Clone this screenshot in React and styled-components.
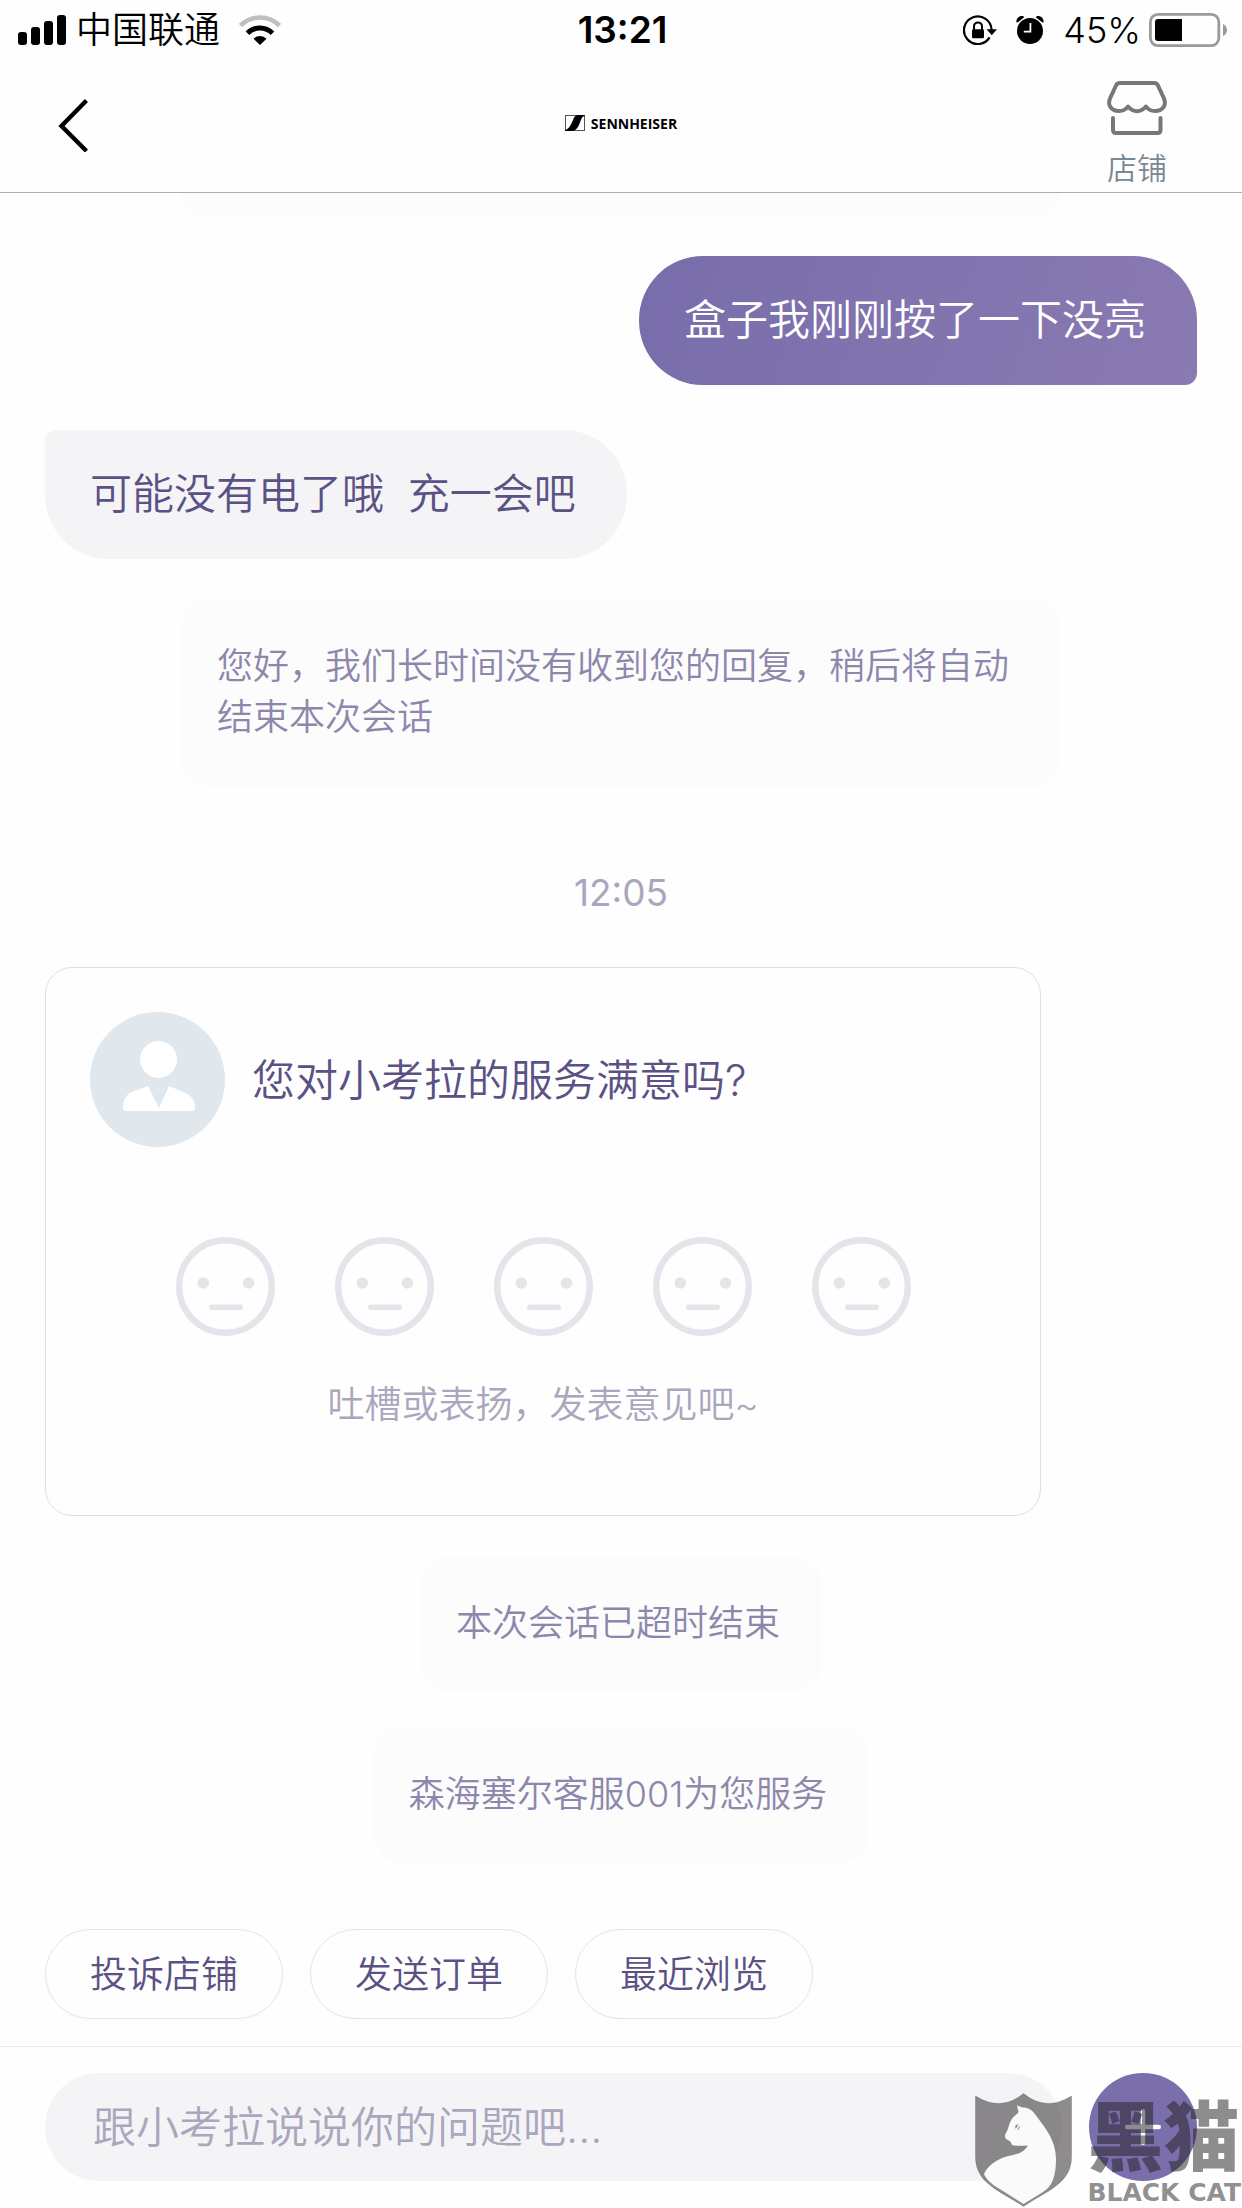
import React from 'react';
import styled, { createGlobalStyle } from 'styled-components';

const quickActions = ['投诉店铺', '发送订单', '最近浏览'];
const scores = [1, 2, 3, 4, 5];

const SignalIcon = () => (
  <svg width="48" height="30" viewBox="0 0 48 30" aria-hidden="true">
    <rect x="0" y="17" width="9" height="13" rx="3" />
    <rect x="13" y="12" width="9" height="18" rx="3" />
    <rect x="26" y="6" width="9" height="24" rx="3" />
    <rect x="39" y="0" width="9" height="30" rx="3" />
  </svg>
);

const WifiIcon = () => (
  <svg width="42" height="30" viewBox="0 0 42 30" aria-hidden="true">
    <path d="M1.5 10.5A27.7 27.7 0 0 1 40.5 10.5" fill="none" stroke="#bfbfbf" strokeWidth="4.6" />
    <path d="M8.5 18.2A17.5 17.5 0 0 1 33.5 18.2" fill="none" stroke="#000" strokeWidth="5" />
    <path d="M21 30L14.5 23.7A9.2 9.2 0 0 1 27.5 23.7Z" />
  </svg>
);

const RotationLockIcon = () => (
  <svg width="34" height="30" viewBox="0 0 34 30" aria-hidden="true">
    <path d="M26.6 22.4A13.8 13.8 0 1 1 28.6 15" fill="none" stroke="#000" strokeWidth="2.2" />
    <path d="M23.5 14.3H34L28.8 20.3Z" />
    <rect x="9" y="14.3" width="12" height="9" rx="1.4" />
    <path d="M11 15V11.4A4 4 0 0 1 19 11.4V15" fill="none" stroke="#000" strokeWidth="2" />
  </svg>
);

const AlarmIcon = () => (
  <svg width="28" height="30" viewBox="0 0 28 30" aria-hidden="true">
    <circle cx="14" cy="16" r="13" />
    <path d="M0.4 7.2C0 3.2 3.4 0.4 7 1L8.2 2.2L1.6 7.6Z" />
    <path d="M27.6 7.2C28 3.2 24.6 0.4 21 1L19.8 2.2L26.4 7.6Z" />
    <path d="M14.4 8V16.6H7.8" fill="none" stroke="#fff" strokeWidth="1.8" />
  </svg>
);

const BatteryIcon = () => (
  <svg width="78" height="34" viewBox="0 0 78 34" aria-hidden="true">
    <rect x="1.4" y="1.4" width="68.4" height="31.2" rx="7.5" fill="none" stroke="#9a9a9a" strokeWidth="2.8" />
    <path d="M9 6H33V28H9Q6 28 6 25V9Q6 6 9 6Z" />
    <path d="M74 11Q78 13 78 17T74 23Z" fill="#9a9a9a" />
  </svg>
);

const BackIcon = () => (
  <svg width="30" height="58" viewBox="0 0 30 58" fill="none" stroke="#000" strokeWidth="4.4" aria-hidden="true">
    <path d="M28.5 6.5L3.5 32L28.5 57" />
  </svg>
);

const BrandMark = () => (
  <svg width="20" height="16" viewBox="0 0 20 16" aria-hidden="true">
    <rect x="0.5" y="0.5" width="19" height="15" fill="none" stroke="#555" />
    <path d="M0 15C4 14 6 10 8 5C9 2 10 1 12 0H19.5V1C16 2 16 6 14 10C12 14 10.5 15.5 7 16H0Z" />
  </svg>
);

const StoreIcon = () => (
  <svg width="60" height="54" viewBox="0 0 60 54" fill="none" stroke="#777" strokeWidth="4" strokeLinecap="round" strokeLinejoin="round" aria-hidden="true">
    <path d="M13 2H47Q50 2 51 4.5L57 17.5C60 25 55 30 48 30C44 30 41 28.5 39 25.5C36 29 33 30.2 30 30.2C27 30.2 24 29 21 25.5C19 28.5 16 30 12 30C5 30 0 25 3 17.5L9 4.5Q10 2 13 2Z" />
    <path d="M6 37V49Q6 52 9 52H50.5Q53.5 52 53.5 49V37" />
  </svg>
);

const AvatarIcon = () => (
  <svg width="135" height="135" viewBox="0 0 135 135" aria-hidden="true">
    <circle cx="67.5" cy="67.5" r="67.5" fill="#e0e7ed" />
    <circle cx="68.5" cy="47.5" r="18.5" fill="#fff" />
    <path d="M33 96C33 85 38 81 46 78.5L58 74L69 96L79 74L92 79.5C101 83 105 87 105 96Q105 99 102 99H36Q33 99 33 96Z" fill="#fff" />
  </svg>
);

const FaceIcon = () => (
  <svg width="99" height="99" viewBox="0 0 99 99" aria-hidden="true">
    <circle cx="49.5" cy="49.5" r="46.3" fill="none" stroke="#e5e4ea" strokeWidth="6.4" />
    <circle cx="27.3" cy="46" r="5.8" fill="#e5e4ea" />
    <circle cx="72.5" cy="46" r="5.8" fill="#e5e4ea" />
    <rect x="33" y="67.5" width="34" height="5.6" rx="2.8" fill="#e5e4ea" />
  </svg>
);

const PlusIcon = () => (
  <svg width="36" height="36" viewBox="0 0 36 36" stroke="#fff" strokeWidth="4.4" strokeLinecap="round" aria-hidden="true">
    <path d="M2.2 18H33.8M18 2.2V33.8" />
  </svg>
);

const CatShield = () => (
  <svg width="97" height="115" viewBox="0 0 97 115" aria-hidden="true">
    <path
      d="M0.5 3Q26 19 48.5 0.5Q71 19 96.5 3V64C96.5 91 71 98 48.5 113.5C26 98 0.5 91 0.5 64Z"
      fill="rgba(38, 34, 36, 0.52)"
      stroke="rgba(38, 34, 36, 0.2)"
    />
    <path
      d="M42 12.5L47.5 14.5C52 14.5 56 16 59 20C68 32 81 46 81 66C81 81 78 93 68 99L48.5 111L20 93C14 89 10 84 9 81C14 70 26 64 38 62C45 60.5 50 58 53 52.5C47 53 41 53 37 52C36 48 33 47 31 46C29.5 44 29.5 42 31 40C34 35 34 28 39 23.5C41 21.5 43 20.5 43.5 19Z"
      fill="#fafafa"
    />
    <path d="M40 33.5Q41 31 43.5 31.5L40.8 36ZM44.8 32.5L42 37Q45 36.5 44.8 32.5Z" fill="#8f8d8e" />
  </svg>
);

const App = () => {
  return (
    <Page>
      <GlobalStyle />
      <Header>
        <StatusBar>
          <StatusGroup>
            <SignalIcon />
            <span>中国联通</span>
            <WifiSlot>
              <WifiIcon />
            </WifiSlot>
          </StatusGroup>
          <Clock>13:21</Clock>
          <StatusGroup $end>
            <RotationLockIcon />
            <AlarmSlot>
              <AlarmIcon />
            </AlarmSlot>
            <span>45%</span>
            <BatteryIcon />
          </StatusGroup>
        </StatusBar>
        <Nav>
          <BackButton type="button" aria-label="返回">
            <BackIcon />
          </BackButton>
          <Brand>
            <BrandMark />
            <span>SENNHEISER</span>
          </Brand>
          <StoreLink href="#store">
            <StoreIcon />
            <span>店铺</span>
          </StoreLink>
        </Nav>
      </Header>

      <Chat>
        <EarlierNotice />
        <Bubble $mine>盒子我刚刚按了一下没亮</Bubble>
        <Bubble>可能没有电了哦  充一会吧</Bubble>
        <Notice>您好，我们长时间没有收到您的回复，稍后将自动结束本次会话</Notice>
        <Time>12:05</Time>
        <RatingCard>
          <RatingHead>
            <AvatarIcon />
            <h2>您对小考拉的服务满意吗?</h2>
          </RatingHead>
          <Faces>
            {scores.map((score) => (
              <FaceButton key={score} type="button" aria-label={`${score}分`}>
                <FaceIcon />
              </FaceButton>
            ))}
          </Faces>
          <RatingHint>吐槽或表扬，发表意见吧~</RatingHint>
        </RatingCard>
        <Notice>本次会话已超时结束</Notice>
        <Notice $follow>森海塞尔客服001为您服务</Notice>
      </Chat>

      <QuickBar>
        {quickActions.map((label) => (
          <QuickButton key={label} type="button">{label}</QuickButton>
        ))}
      </QuickBar>
      <InputBar>
        <MessageInput type="text" aria-label="消息" placeholder="跟小考拉说说你的问题吧..." />
        <MoreButton type="button" aria-label="更多">
          <PlusIcon />
        </MoreButton>
        <Watermark>
          <CatShield />
          <WatermarkText>
            <strong>黑猫</strong>
            <span>BLACK CAT</span>
          </WatermarkText>
        </Watermark>
      </InputBar>
    </Page>
  );
};

const GlobalStyle = createGlobalStyle`
* {
  box-sizing: border-box;
}
body {
  margin: 0;
  background: #fefefe;
  color: #5b5185;
  font-family: Inter, "Noto Sans CJK SC", sans-serif;
  font-weight: 350;
}
svg {
  display: block;
  flex: none;
}
button {
  padding: 0;
  border: 0;
  background: none;
  color: inherit;
  font-family: inherit;
  font-weight: inherit;
  cursor: pointer;
}
`;

const Page = styled.div`
  display: flex;
  flex-direction: column;
  min-height: 100vh;
`;

const Header = styled.header`
  border-bottom: 1px solid #b0b0b0;
`;

const StatusBar = styled.div`
  display: grid;
  grid-template-columns: 1fr auto 1fr;
  align-items: center;
  height: 60px;
  padding: 0 15px 0 18px;
  color: #000;
  font-size: 36px;
  line-height: 60px;
`;

const StatusGroup = styled.div`
  display: flex;
  align-items: center;
  justify-content: ${({ $end }) => ($end ? 'flex-end' : 'flex-start')};
  gap: ${({ $end }) => ($end ? '8px' : '10px')};
`;

const WifiSlot = styled.span`
  margin-left: 9px;
`;

const AlarmSlot = styled.span`
  margin: 0 11px;
`;

const Clock = styled.time`
  font-size: 37px;
  font-weight: 600;
`;

const Nav = styled.nav`
  display: grid;
  grid-template-columns: 1fr auto 1fr;
  align-items: center;
  height: 132px;
  padding: 0 58px 6px;
`;

const BackButton = styled.button`
  justify-self: start;
`;

const Brand = styled.div`
  display: flex;
  align-items: center;
  justify-content: center;
  gap: 6px;
  width: 118px;
  height: 118px;
  border: 1px solid #fbfbfb;
  border-radius: 50%;
  color: #000;
  font-family: "Open Sans", sans-serif;
  font-size: 14px;
  font-weight: 700;
`;

const StoreLink = styled.a`
  display: flex;
  flex-direction: column;
  align-self: end;
  justify-self: end;
  align-items: center;
  gap: 15px;
  padding-right: 17px;
  color: #7b8794;
  font-size: 30px;
  line-height: 36px;
  text-decoration: none;
`;

const Chat = styled.main`
  display: flex;
  flex: 1;
  flex-direction: column;
  align-items: center;
  padding: 0 45px 65px;
`;

/* tail of the notice that has scrolled under the header */
const EarlierNotice = styled.div`
  width: 100%;
  max-width: 880px;
  height: 24px;
  border-radius: 0 0 30px 30px;
  background: #fcfcfc;
`;

const Bubble = styled.p`
  align-self: ${({ $mine }) => ($mine ? 'flex-end' : 'flex-start')};
  margin: ${({ $mine }) => ($mine ? '39px 0 0' : '45px 0 0')};
  padding: 34px 51px 35px 45px;
  border-radius: ${({ $mine }) => ($mine ? '64px 64px 12px 64px' : '12px 64px 64px 64px')};
  background: ${({ $mine }) => ($mine ? 'linear-gradient(110deg, #786dab, #8a7ab2)' : '#f4f4f7')};
  color: ${({ $mine }) => ($mine ? '#fff' : '#5b5185')};
  font-size: 42px;
  line-height: 60px;
  white-space: pre-wrap;
`;

const Notice = styled.p`
  max-width: 880px;
  margin: ${({ $follow }) => ($follow ? '33px 0 0' : '39px 0 0')};
  padding: 43px 42px 44px 36px;
  border-radius: 30px;
  background: #fcfcfc;
  color: #8d87ac;
  font-size: 36px;
  line-height: 51px;
`;

const Time = styled.time`
  margin: 80px 0 49px;
  color: #aaa6bd;
  font-size: 37px;
  font-weight: 400;
  line-height: 51px;
`;

const RatingCard = styled.section`
  align-self: flex-start;
  width: 100%;
  max-width: 996px;
  padding: 44px 44px 85px;
  border: 1px solid #dfdde9;
  border-radius: 27px;
`;

const RatingHead = styled.div`
  display: flex;
  align-items: center;
  gap: 27px;
  h2 {
    margin: 0;
    font-size: 43px;
    font-weight: inherit;
    line-height: 60px;
  }
`;

const Faces = styled.div`
  display: flex;
  justify-content: center;
  gap: 60px;
  margin-top: 90px;
`;

const FaceButton = styled.button`
  border-radius: 50%;
`;

const RatingHint = styled.p`
  margin: 43px 0 0;
  color: #aaa6bd;
  font-size: 37px;
  line-height: 51px;
  text-align: center;
`;

const QuickBar = styled.div`
  display: flex;
  gap: 27px;
  padding: 0 45px 27px;
`;

const QuickButton = styled.button`
  height: 90px;
  padding: 0 44px;
  border: 1px solid #e5e3ec;
  border-radius: 45px;
  font-size: 37px;
  line-height: 51px;
`;

const InputBar = styled.div`
  position: relative;
  display: flex;
  gap: 27px;
  padding: 26px 45px 27px;
  border-top: 1px solid #ececf0;
`;

const MessageInput = styled.input`
  flex: 1;
  min-width: 0;
  height: 108px;
  padding: 0 48px;
  border: 0;
  border-radius: 54px;
  outline: 0;
  background: #f4f4f7;
  color: #5b5185;
  font-family: inherit;
  font-size: 43px;
  font-weight: inherit;
  &::placeholder {
    color: #aaa6bd;
    opacity: 1;
  }
`;

const MoreButton = styled.button`
  display: flex;
  align-items: center;
  justify-content: center;
  width: 108px;
  height: 108px;
  border-radius: 50%;
  background: #7a6eab;
`;

const Watermark = styled.div`
  position: absolute;
  right: 1px;
  bottom: 0;
  display: flex;
  align-items: flex-end;
  gap: 15px;
  color: rgba(38, 34, 36, 0.52);
  pointer-events: none;
`;

const WatermarkText = styled.div`
  display: flex;
  flex-direction: column;
  gap: 6px;
  strong {
    font-family: "Liberation Sans", "Noto Sans CJK SC", sans-serif;
    font-size: 76px;
    font-weight: 900;
    line-height: 66px;
  }
  span {
    font-family: "DejaVu Sans", sans-serif;
    font-size: 25px;
    font-weight: 700;
    line-height: 30px;
  }
`;

export default App;
